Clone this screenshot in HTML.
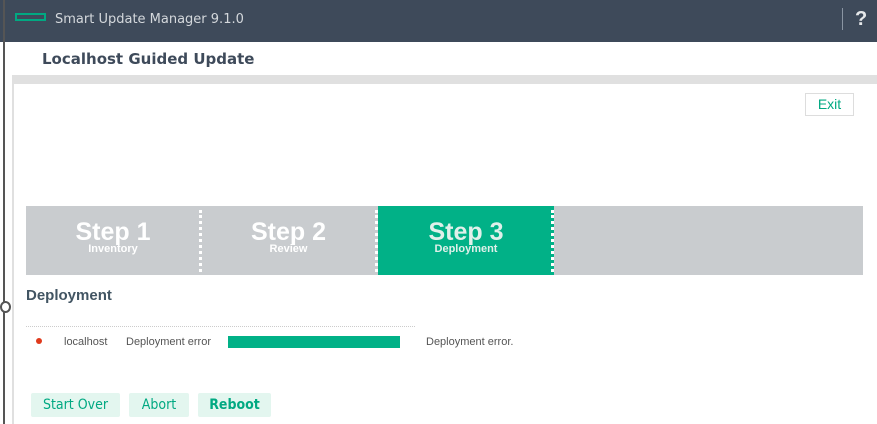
<!DOCTYPE html>
<html><head><style>
*{margin:0;padding:0;box-sizing:border-box}
body{width:877px;height:424px;overflow:hidden;background:#fff;font-family:"Liberation Sans",sans-serif;position:relative}
.a{position:absolute}
.hdr{left:0;top:0;width:877px;height:42px;background:#3e4a5a}
.step{top:206px;height:69px;background:#c9cccf;color:#fff;text-align:center}
.step b{display:block;font-size:25px;line-height:25px;margin-top:14px}
.step span{display:block;font-size:11px;font-weight:bold;line-height:11px;margin-top:-1px}
.dot{width:0;top:210px;height:62px;border-left:3px dotted #fff}
.btn{top:393px;height:24px;background:#e3f6ef;color:#01a982;font-size:14px;line-height:25px;text-align:center;border-radius:2px;font-family:"DejaVu Sans Condensed","Liberation Sans",sans-serif}
.t{font-size:11px;color:#555;top:336px}
</style></head><body>
<div class="a hdr"></div>
<div class="a" style="left:15px;top:13px;width:31px;height:8px;border:2px solid #01a982"></div>
<div class="a" style="left:55px;top:12px;color:#d4d8dc;font-size:13px;font-family:'DejaVu Sans',sans-serif">Smart Update Manager 9.1.0</div>
<div class="a" style="left:842px;top:8px;width:1px;height:22px;background:#8a95a2"></div>
<div class="a" style="left:855px;top:8px;color:#e6e8ea;font-size:20px;font-weight:bold">?</div>
<div class="a" style="left:42px;top:50px;color:#3e4a5a;font-size:15px;font-weight:bold;font-family:'DejaVu Sans',sans-serif">Localhost Guided Update</div>
<div class="a" style="left:12px;top:75px;width:865px;height:349px;background:#e0e0e0"></div>
<div class="a" style="left:14px;top:84px;width:863px;height:340px;background:#fff"></div>
<div class="a" style="left:3px;top:0;width:2px;height:424px;background:#555"></div>
<div class="a" style="left:0;top:301px;width:11px;height:12px;border:2px solid #555;border-radius:50%;background:#fff"></div>
<div class="a" style="left:805px;top:93px;width:49px;height:23px;border:1px solid #ddd;color:#01a982;font-size:14px;text-align:center;line-height:21px">Exit</div>
<div class="a step" style="left:26px;width:837px"></div>
<div class="a step" style="left:26px;width:174px"><b>Step 1</b><span>Inventory</span></div>
<div class="a step" style="left:200px;width:177px"><b>Step 2</b><span>Review</span></div>
<div class="a step" style="left:378px;width:176px;background:#01b187;color:#e0f0ea"><b>Step 3</b><span>Deployment</span></div>
<div class="a dot" style="left:199px"></div>
<div class="a dot" style="left:375px"></div>
<div class="a dot" style="left:551px"></div>
<div class="a" style="left:26px;top:287px;color:#425563;font-size:15px;font-weight:bold">Deployment</div>
<div class="a" style="left:26px;top:326px;width:389px;border-top:1px dotted #ccc"></div>
<div class="a" style="left:36px;top:338px;width:6px;height:6px;border-radius:50%;background:#e03a1c"></div>
<div class="a t" style="left:64px">localhost</div>
<div class="a t" style="left:126px">Deployment error</div>
<div class="a" style="left:228px;top:336px;width:172px;height:12px;background:#01b187"></div>
<div class="a t" style="left:426px">Deployment error.</div>
<div class="a btn" style="left:31px;width:89px">Start Over</div>
<div class="a btn" style="left:129px;width:60px">Abort</div>
<div class="a btn" style="left:198px;width:73px;font-weight:bold">Reboot</div>
</body></html>
